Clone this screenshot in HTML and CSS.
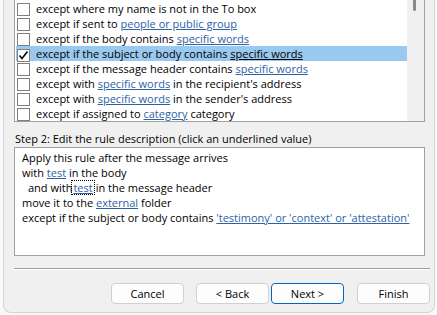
FILE: index.html
```html
<!DOCTYPE html>
<html lang="en">
<head>
    <meta charset="UTF-8">
    <title>Rules Wizard</title>
    <link rel="stylesheet" href="styles.css">
</head>
<body>
    <div class="dialog">
        <div class="listbox">
            <div class="rows">
                <div class="row"><span class="check"></span>except where my name is not in the To box</div>
                <div class="row"><span class="check"></span>except if sent to <a href="#">people or public group</a></div>
                <div class="row"><span class="check"></span>except if the body contains <a href="#">specific words</a></div>
                <div class="row selected"><span class="check"><svg width="11" height="11" viewBox="0 0 11 11"><path d="M1.5 5.5 L4 8.5 L9.5 1.5" fill="none" stroke="#000" stroke-width="1.6"/></svg></span>except if the subject or body contains <a href="#">specific words</a></div>
                <div class="row"><span class="check"></span>except if the message header contains <a href="#">specific words</a></div>
                <div class="row"><span class="check"></span>except with <a href="#">specific words</a> in the recipient's address</div>
                <div class="row"><span class="check"></span>except with <a href="#">specific words</a> in the sender's address</div>
                <div class="row"><span class="check"></span>except if assigned to <a href="#">category</a> category</div>
            </div>
            <div class="scrollbar"><div class="thumb"></div></div>
        </div>

        <div class="label">Step 2: Edit the rule description (click an underlined value)</div>
        <div class="description">
            <div class="line">Apply this rule after the message arrives</div>
            <div class="line">with <a href="#">test</a> in the body</div>
            <div class="line indent">and with<a href="#" class="focus">test</a>in the message header</div>
            <div class="line">move it to the <a href="#">external</a> folder</div>
            <div class="line">except if the subject or body contains <a href="#">'testimony' or 'context' or 'attestation'</a></div>
        </div>

        <div class="separator"></div>

        <div class="buttons">
            <button class="cancel">Cancel</button>
            <button class="back">&lt; Back</button>
            <button class="next">Next &gt;</button>
            <button>Finish</button>
        </div>
    </div>
</body>
</html>
```
FILE: styles.css
```css
body {
    margin: 0;
    background-color: #f9f9f9;
    font-family: 'Open Sans', sans-serif;
    font-size: 11px;
    color: #000;
    overflow: hidden;
}
a {
    color: #2e62a6;
    text-decoration: underline;
}
.dialog {
    display: flow-root;
    margin-left: 3px;
    width: 416px;
    height: 312px;
    padding: 0 4px 0 10px;
    background-color: #f0f0f0;
    border: 1px solid #d4d4d4;
    border-top: none;
    border-radius: 0 0 8px 8px;
}
.listbox {
    display: flex;
    width: 409px;
    margin-top: -15px;
    background-color: #fff;
    border: 1px solid #a0a0a0;
}
.rows {
    flex: 1;
    padding-top: 15px;
}
.row {
    height: 15px;
    line-height: 15px;
    margin-left: 1px;
    white-space: nowrap;
}
.row.selected {
    background-color: #99c9ef;
}
.row.selected a {
    color: #000;
}
.check {
    display: inline-flex;
    align-items: center;
    justify-content: center;
    box-sizing: border-box;
    width: 13px;
    height: 13px;
    margin: 0 6px 0 1px;
    vertical-align: -3px;
    background-color: #fff;
    border: 1px solid #7f7f7f;
}
.scrollbar {
    width: 17px;
    background-color: #f0f0f0;
}
.thumb {
    width: 3px;
    height: 25px;
    margin-left: 6px;
    background-color: #8a8a8a;
    border-radius: 0 0 2px 2px;
}
.label {
    height: 15px;
    line-height: 15px;
    margin: 9px 0 1px 1px;
}
.description {
    box-sizing: border-box;
    width: 411px;
    height: 109px;
    padding: 2px 7px;
    background-color: #fff;
    border: 1px solid #a0a0a0;
}
.line {
    height: 15px;
    line-height: 15px;
    white-space: nowrap;
}
.indent {
    padding-left: 6px;
}
.focus {
    display: inline-block;
    height: 13px;
    line-height: 13px;
    padding: 0 1px;
    margin-right: 2px;
    vertical-align: top;
    margin-top: 1px;
    outline: 1px dotted #000;
}
.separator {
    height: 1px;
    margin-top: 12px;
    background-color: #a0a0a0;
    border-bottom: 1px solid #fff;
}
.buttons {
    display: flex;
    justify-content: flex-end;
    margin-top: 13px;
}
button {
    width: 73px;
    height: 21px;
    padding: 0;
    font-family: 'Open Sans', sans-serif;
    font-size: 11px;
    color: #000;
    background-color: #fdfdfd;
    border: 1px solid #d0d0d0;
    border-radius: 4px;
}
.cancel {
    margin-right: 12px;
}
.back {
    margin-right: 2px;
}
.next {
    margin-right: 13px;
    border-color: #0067c0;
}
```
